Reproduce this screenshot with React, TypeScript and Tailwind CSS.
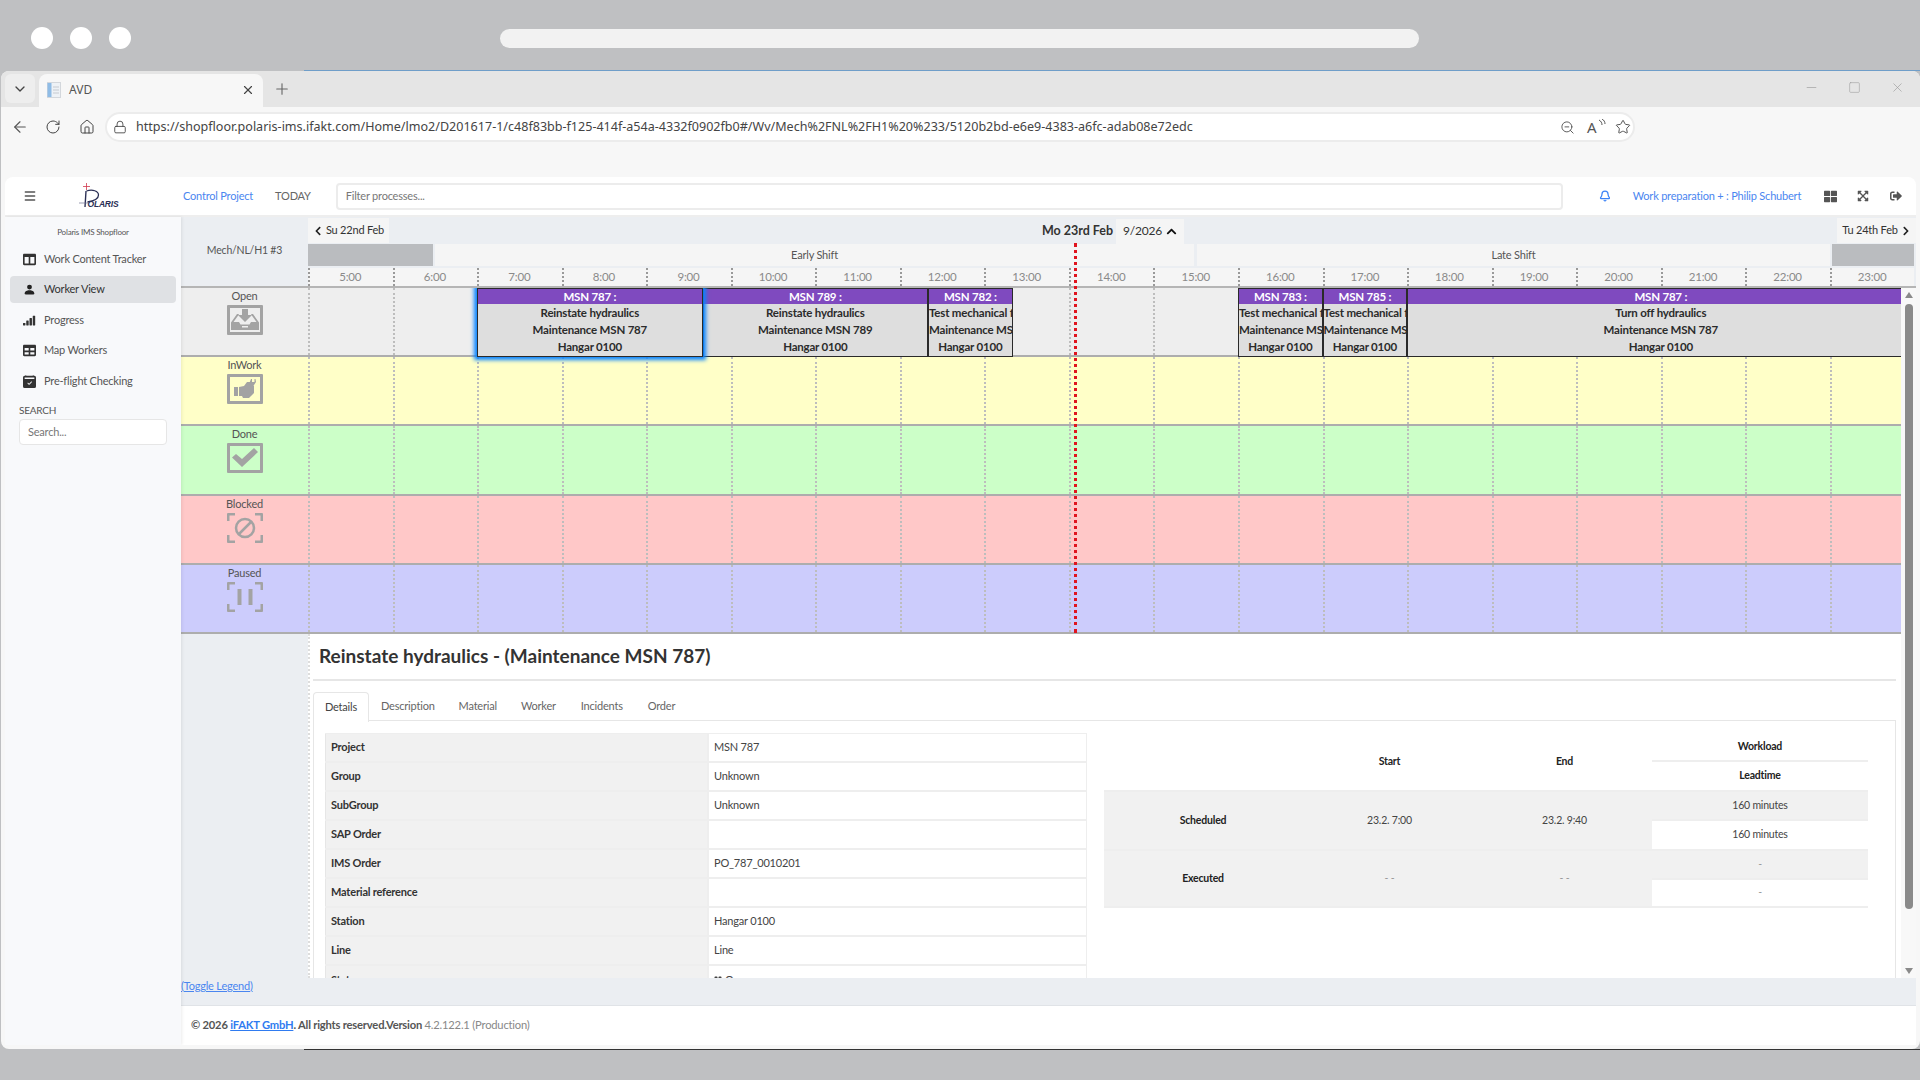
import { ArrowLeft, ChevronDown, Home, Lock, Minus, Plus, RotateCw, Square, Star, X, ZoomOut, Bell, Menu } from "lucide-react";
import { BsCalendar2CheckFill, BsPersonFill, BsReception4 } from "react-icons/bs";
import { FaChevronLeft, FaChevronRight, FaChevronUp, FaColumns, FaExpandArrowsAlt, FaPause, FaSignOutAlt, FaTable, FaThLarge } from "react-icons/fa";

const HOUR = 84.55;
const hours = Array.from({ length: 19 }, (_, i) => `${i + 5}:00`);

const events = [
  { msn: "MSN 787 :", title: "Reinstate hydraulics", order: "Maintenance MSN 787", start: 7, mins: 160, selected: true },
  { msn: "MSN 789 :", title: "Reinstate hydraulics", order: "Maintenance MSN 789", start: 9 + 40 / 60, mins: 160 },
  { msn: "MSN 782 :", title: "Test mechanical functions", order: "Maintenance MSN 782", start: 12 + 20 / 60, mins: 60 },
  { msn: "MSN 783 :", title: "Test mechanical functions", order: "Maintenance MSN 783", start: 16, mins: 60 },
  { msn: "MSN 785 :", title: "Test mechanical functions", order: "Maintenance MSN 785", start: 17, mins: 60 },
  { msn: "MSN 787 :", title: "Turn off hydraulics", order: "Maintenance MSN 787", start: 18, mins: 360 },
];

const nav = [
  { label: "Work Content Tracker", Icon: FaColumns },
  { label: "Worker View", Icon: BsPersonFill, active: true },
  { label: "Progress", Icon: BsReception4 },
  { label: "Map Workers", Icon: FaTable },
  { label: "Pre-flight Checking", Icon: BsCalendar2CheckFill },
];

const details = [
  ["Project", "MSN 787"],
  ["Group", "Unknown"],
  ["SubGroup", "Unknown"],
  ["SAP Order", ""],
  ["IMS Order", "PO_787_0010201"],
  ["Material reference", ""],
  ["Station", "Hangar 0100"],
  ["Line", "Line"],
];

function OpenIcon() {
  return (
    <svg width="36" height="30" viewBox="0 0 36 30" fill="#a3a3a3">
      <path fillRule="evenodd" d="M1 0h34a1 1 0 0 1 1 1v28a1 1 0 0 1-1 1H1a1 1 0 0 1-1-1V1a1 1 0 0 1 1-1zm2 3v24h30V3z" />
      <path d="M15 4h6v6h4l-7 7-7-7h4z" />
      <path d="M10 9h2l-1 2h-.2L6.5 17H12l1.5 2.5h9L24 17h5.500l-4.300-6H25l-1-2h2l6 8.500V25H4v-7.500z" />
      <path d="M15 21h6v1.500h-6z" fill="#eeeeee" />
    </svg>
  );
}

function InWorkIcon() {
  return (
    <svg width="36" height="30" viewBox="0 0 36 30" fill="#a3a3a3">
      <path fillRule="evenodd" d="M1 0h34a1 1 0 0 1 1 1v28a1 1 0 0 1-1 1H1a1 1 0 0 1-1-1V1a1 1 0 0 1 1-1zm2 3v24h30V3z" />
      <path d="M7 13h4v9H7z" />
      <path d="M12 13l5-1 3-4h4l3 4v7l-3 3-2 2h-6l-1-2h-3z" />
      <path d="M22 10l2-5h1v3h2.500V5h1l.5 3-2 3-3 2z" />
    </svg>
  );
}

function DoneIcon() {
  return (
    <svg width="36" height="30" viewBox="0 0 36 30" fill="#a3a3a3">
      <path fillRule="evenodd" d="M1 0h34a1 1 0 0 1 1 1v28a1 1 0 0 1-1 1H1a1 1 0 0 1-1-1V1a1 1 0 0 1 1-1zm2 3v24h30V3z" />
      <path d="M5 14.500l4-3.500 6 5L27 5l4 4-16 15z" />
    </svg>
  );
}

function Brackets() {
  return <path d="M0 8V1a1 1 0 0 1 1-1h7v2.500H2.500V8zM28 0h7a1 1 0 0 1 1 1v7h-2.500V2.500H28zM0 22h2.500v5.500H8V30H1a1 1 0 0 1-1-1zM33.500 22H36v7a1 1 0 0 1-1 1h-7v-2.500h5.500z" />;
}

function BlockedIcon() {
  return (
    <svg width="36" height="30" viewBox="0 0 36 30" fill="#a3a3a3">
      <Brackets />
      <circle cx="18" cy="15" r="9" fill="none" stroke="#a3a3a3" strokeWidth="2.500" />
      <path d="M12 21L24 9" stroke="#a3a3a3" strokeWidth="2.500" />
    </svg>
  );
}

function PausedIcon() {
  return (
    <svg width="36" height="30" viewBox="0 0 36 30" fill="#a3a3a3">
      <Brackets />
      <rect x="10.500" y="7" width="4" height="16" />
      <rect x="21.500" y="7" width="4" height="16" />
    </svg>
  );
}

const rows = [
  { label: "Open", bg: "bg-[#eeeeee]", Icon: OpenIcon },
  { label: "InWork", bg: "bg-[#ffffc8]", Icon: InWorkIcon },
  { label: "Done", bg: "bg-[#ccffc8]", Icon: DoneIcon },
  { label: "Blocked", bg: "bg-[#ffc8c8]", Icon: BlockedIcon },
  { label: "Paused", bg: "bg-[#ccccfc]", Icon: PausedIcon },
];

function Logo() {
  return (
    <svg width="40" height="27" viewBox="0 0 40 27" className="ml-[42px] shrink-0">
      <path d="M7.500 0v7M4 3.500h7" stroke="#d0394e" strokeWidth="0.800" />
      <path d="M7 8L6 24" stroke="#2b2f55" strokeWidth="1.400" />
      <path d="M7.500 8c6-2 12 0 12 4s-5 6-11 7" fill="none" stroke="#2b2f55" strokeWidth="1.300" />
      <path d="M0 20h10" stroke="#6d7090" strokeWidth="0.700" />
      <text x="8.500" y="24" fontSize="8.500" fontWeight="700" fontStyle="italic" fill="#2b2f55" fontFamily="Liberation Sans, sans-serif">OLARIS</text>
    </svg>
  );
}

function ReadAloud() {
  return (
    <div className="relative w-[16px] h-[16px] leading-[16px]">
      <span className="text-[15px] leading-[16px] text-[#555]">A</span>
      <svg width="8" height="9" viewBox="0 0 8 9" className="absolute right-[-3px] top-0" fill="none" stroke="#555" strokeWidth="1">
        <path d="M1 1c2 1 3 3 3 5M4 0c2 1 3 3 3 5" />
      </svg>
    </div>
  );
}

function Event({ e }: { e: (typeof events)[number] }) {
  return (
    <div
      style={{ left: (e.start - 5) * HOUR, width: (e.mins / 60) * HOUR }}
      className={`absolute top-0 h-[69px] border-[1.5px] border-[#2a2a2a] bg-[#dedede] overflow-hidden whitespace-nowrap text-center text-[11.5px] font-bold leading-[17px] text-[#2b2b2b] ${e.selected ? "z-20 shadow-[0_0_4px_3px_#0a84ff]" : "z-10"}`}
    >
      <div className="h-[15px] bg-[#7f4abf] text-white leading-[15px]">{e.msn}</div>
      <div>{e.title}</div>
      <div>{e.order}</div>
      <div>Hangar 0100</div>
    </div>
  );
}

export default function App() {
  return (
    <div className="w-[1920px] h-[1080px] bg-[#bfc0c2] overflow-hidden flex flex-col text-[#444] font-['Lato','Noto_Sans',sans-serif]">
      <div className="h-[70px] shrink-0 flex items-center pt-[6px]">
        <div className="flex gap-[17px] ml-[31px]">
          <span className="w-[22px] h-[22px] rounded-full bg-white" />
          <span className="w-[22px] h-[22px] rounded-full bg-white" />
          <span className="w-[22px] h-[22px] rounded-full bg-white" />
        </div>
        <div className="ml-[369px] w-[919px] h-[19px] rounded-full bg-[#f2f2f2]" />
      </div>

      <div className="h-px ml-[304px] bg-[#6f9ec9] shrink-0" />

      <div className="h-[978px] shrink-0 flex flex-col bg-[#f7f7f7] rounded-t-lg rounded-b-lg ml-px font-['Noto_Sans',sans-serif]">
        <div className="h-[36px] shrink-0 bg-[#e5e5e5] rounded-t-lg flex items-end pl-[4px] relative">
          <div className="w-[30px] h-[29px] mb-[4px] rounded-md bg-[#eeeeee] flex items-center justify-center">
            <ChevronDown className="size-[16px] text-[#444]" />
          </div>
          <div className="ml-[4px] w-[224px] h-[33px] bg-[#f7f7f7] rounded-t-lg flex items-center pl-[8px] pr-[8px] pb-[2px]">
            <svg width="14" height="16" viewBox="0 0 14 16" className="shrink-0">
              <rect x="0.500" y="0.500" width="13" height="15" fill="#eef2f6" stroke="#d3d7dc" />
              <rect x="0.500" y="1" width="4" height="14" fill="#8fbce6" />
              <path d="M6 5h6M6 8h6M6 11h6" stroke="#c6cad0" />
            </svg>
            <span className="ml-[8px] text-[12px] text-[#555]">AVD</span>
            <X className="ml-auto size-[14px] text-[#444]" />
          </div>
          <Plus className="ml-[10px] mb-[9px] size-[18px] text-[#666]" strokeWidth={1.500} />
          <div className="ml-auto flex items-center gap-[29px] pr-[15px] mb-[12px] text-[#999]">
            <Minus className="size-[15px]" strokeWidth={1} />
            <Square className="size-[13px]" strokeWidth={1} />
            <X className="size-[15px]" strokeWidth={1} />
          </div>
        </div>

        <div className="h-[70px] shrink-0 pt-[5px]">
          <div className="flex items-center">
            <ArrowLeft className="ml-[10px] size-[18px] text-[#555]" strokeWidth={1.500} />
            <RotateCw className="ml-[16px] size-[16px] text-[#444]" strokeWidth={1.500} />
            <Home className="ml-[18px] size-[16px] text-[#444]" strokeWidth={1.500} />
            <div className="ml-[10px] w-[1530px] h-[30px] rounded-full bg-white border-2 border-[#ececec] flex items-center pl-[6px] pr-[2px]">
              <Lock className="size-[14px] text-[#444] shrink-0" strokeWidth={1.500} />
              <span className="ml-[9px] text-[12.56px] text-[#444] whitespace-nowrap">
                https://shopfloor.polaris-ims.ifakt.com/Home/lmo2/D201617-1/c48f83bb-f125-414f-a54a-4332f0902fb0#/Wv/Mech%2FNL%2FH1%20%233/5120b2bd-e6e9-4383-a6fc-adab08e72edc
              </span>
              <div className="ml-auto flex items-center gap-[12px]">
                <ZoomOut className="size-[15px] text-[#555]" strokeWidth={1.500} />
                <ReadAloud />
                <Star className="size-[16px] text-[#555]" strokeWidth={1.500} />
              </div>
            </div>
          </div>
        </div>

        <div className="h-[868px] shrink-0 ml-[4px] mr-[4px] rounded-t-lg bg-white flex flex-col overflow-hidden tracking-[-0.2px] font-['Lato','Noto_Sans',sans-serif]">
          <div className="h-[40px] shrink-0 flex items-center border-b-2 border-[#eeeeee]">
            <Menu className="ml-[18px] size-[14px] text-[#555] shrink-0" strokeWidth={2.500} />
            <Logo />
            <a className="ml-[64px] text-[11px] text-[#4a86f0] whitespace-nowrap">Control Project</a>
            <span className="ml-[22px] text-[11px] text-[#666]">TODAY</span>
            <div className="ml-[25px] w-[1227px] shrink-0 h-[27px] rounded border-2 border-[#ececec] flex items-center pl-[8px] text-[11px] text-[#777]">
              Filter processes...
            </div>
            <Bell className="ml-[36px] size-[12px] text-[#3b82f6] shrink-0" strokeWidth={2.500} />
            <span className="ml-[22px] text-[11px] text-[#4a86f0] whitespace-nowrap">Work preparation + : Philip Schubert</span>
            <FaThLarge className="ml-[23px] size-[13px] text-[#555] shrink-0" />
            <FaExpandArrowsAlt className="ml-[20px] size-[12px] text-[#555] shrink-0" />
            <FaSignOutAlt className="ml-[21px] size-[12px] text-[#555] shrink-0" />
          </div>

          <div className="flex-1 flex min-h-0">
            <div className="w-[176px] shrink-0 bg-[#f8f9fb] shadow-[1px_0_3px_rgba(0,0,0,0.08)] z-30 px-[5px]">
              <div className="h-[28.5px] flex items-center justify-center text-[8px] text-[#555] pt-[2px]">Polaris IMS Shopfloor</div>
              <div className="flex flex-col gap-[3.5px]">
                {nav.map(({ label, Icon, active }) => (
                  <div key={label} className={`h-[27px] flex items-center pl-[13px] rounded text-[11px] ${active ? "bg-[#dfe1e4] text-[#333]" : "text-[#555]"}`}>
                    <Icon className={`size-[13px] ${active ? "text-[#222]" : "text-[#333]"}`} />
                    <span className="ml-[8px] whitespace-nowrap">{label}</span>
                  </div>
                ))}
              </div>
              <div className="mt-[8.5px] ml-[9px] text-[10px] text-[#555]">SEARCH</div>
              <div className="mt-[1px] ml-[9px] w-[148px] h-[26px] rounded bg-white border border-[#e6e6e6] flex items-center pl-[8px] text-[11px] text-[#777]">
                Search...
              </div>
            </div>

            <div className="flex-1 min-w-0 bg-[#ebeef2] flex flex-col relative">
              <div className="h-[71px] shrink-0 flex border-b-2 border-[#b5b5b5]">
                <div className="w-[127px] shrink-0 text-center text-[10.5px] text-[#555] pt-[26px]">Mech/NL/H1 #3</div>
                <div className="flex-1 min-w-0 flex flex-col pt-px">
                  <div className="h-[26px] flex">
                    <div className="w-[81px] h-[25px] bg-[#f5f5f5] flex items-center justify-center gap-[3px] text-[11px] text-[#333]">
                      <FaChevronLeft className="size-[10px] text-[#222]" />
                      Su 22nd Feb
                    </div>
                    <div className="flex-1 flex items-center justify-center gap-[3px]">
                      <span className="text-[12.500px] font-bold text-[#333] tracking-normal">Mo 23rd Feb</span>
                      <div className="w-[68px] h-[25px] bg-[#f5f5f5] flex items-center justify-center gap-[4px] text-[12px] text-[#333]">
                        9/2026
                        <FaChevronUp className="size-[11px] text-[#111]" />
                      </div>
                    </div>
                    <div className="w-[79px] h-[25px] bg-[#f5f5f5] flex items-center justify-center gap-[3px] text-[11px] text-[#333]">
                      Tu 24th Feb
                      <FaChevronRight className="size-[10px] text-[#222]" />
                    </div>
                  </div>
                  <div className="h-[22px] flex text-[11px] text-[#555]">
                    <div className="w-[125px] bg-[#babcbf]" />
                    <div className="ml-[2px] w-[759px] bg-[#f5f5f5] flex items-center justify-center">Early Shift</div>
                    <div className="ml-[3px] w-[633px] bg-[#f5f5f5] flex items-center justify-center">Late Shift</div>
                    <div className="ml-[2px] w-[82px] bg-[#babcbf]" />
                  </div>
                  <div className="h-[18px] mt-[2px] flex">
                    {hours.map((h) => (
                      <div key={h} className="w-[84.55px] shrink-0 bg-[#f5f5f5] border-l-2 border-dotted border-[#999] flex items-center justify-center pr-[2px] text-[11.5px] text-[#8a8a8a]">
                        {h}
                      </div>
                    ))}
                  </div>
                </div>
              </div>

              <div className="h-[690px] shrink-0 flex">
                <div className="w-[1720px] shrink-0 overflow-hidden">
                  <div className="flex flex-col">
                    {rows.map(({ label, bg, Icon }) => (
                      <div key={label} className={`h-[69.2px] shrink-0 flex border-b-2 border-[#adadad] ${bg}`}>
                        <div className="w-[127px] shrink-0 flex flex-col items-center text-[11px] leading-[16px] text-[#555]">
                          {label}
                          <div className="mt-[1px]">
                            <Icon />
                          </div>
                        </div>
                        <div className="relative flex-1 min-w-0">
                          <div className="flex h-full overflow-hidden">
                            {hours.map((h) => (
                              <div key={h} className="w-[84.55px] shrink-0 border-l-2 border-dotted border-[#bdbdbd]" />
                            ))}
                          </div>
                          {label === "Open" && events.map((e) => <Event key={e.order + e.start} e={e} />)}
                        </div>
                      </div>
                    ))}
                  </div>

                  <div className="flex h-[344px] overflow-hidden">
                    <div className="w-[127px] shrink-0" />
                    <div className="flex-1 min-w-0 bg-white border-l-2 border-dotted border-[#dddddd] pl-[3px] pr-[5px]">
                      <div className="h-[47px] flex items-center border-b-2 border-[#e6e6e6]">
                        <h1 className="pl-[6px] text-[19px] font-bold text-[#333] whitespace-nowrap tracking-normal">Reinstate hydraulics - (Maintenance MSN 787)</h1>
                      </div>
                      <div className="mt-[11px] h-[29px] flex items-stretch text-[11px] text-[#666]">
                        <div className="w-[56px] rounded-t border border-b-0 border-[#e6e6e6] bg-white flex items-center justify-center text-[#444] relative z-10 -mb-px">Details</div>
                        <div className="flex-1 flex items-center border-b border-[#e6e6e6]">
                          <span className="ml-[12px]">Description</span>
                          <span className="ml-[24px]">Material</span>
                          <span className="ml-[24px]">Worker</span>
                          <span className="ml-[25px]">Incidents</span>
                          <span className="ml-[25px]">Order</span>
                        </div>
                      </div>
                      <div className="h-[300px] border-l border-r border-[#e6e6e6] pl-[11px] pt-[12px] flex gap-[17px] items-start">
                        <div className="w-[762px] shrink-0 border-t border-r border-[#eeeeee] text-[11px]">
                          {details.map(([k, v]) => (
                            <div key={k} className="h-[29px] flex border-b-2 border-[#eeeeee]">
                              <div className="w-[382px] shrink-0 bg-[#f1f1f1] border-l border-[#e6e6e6] flex items-center pl-[5px] font-bold text-[#333]">{k}</div>
                              <div className="flex-1 flex items-center pl-[5px] text-[#444] border-l-2 border-[#eeeeee]">{v}</div>
                            </div>
                          ))}
                          <div className="h-[29px] flex">
                            <div className="w-[382px] shrink-0 bg-[#f1f1f1] border-l border-[#e6e6e6] flex items-center pl-[5px] font-bold text-[#333]">State</div>
                            <div className="flex-1 flex items-center pl-[5px] gap-[3px] text-[#444] border-l-2 border-[#eeeeee]">
                              <FaPause className="size-[8px]" />
                              Open
                            </div>
                          </div>
                        </div>
                        <div className="w-[764px] shrink-0 text-[10.5px] text-[#444] text-center">
                          <div className="h-[57px] grid grid-cols-[198px_175px_175px_216px] font-bold text-[#222]">
                            <div />
                            <div className="flex items-center justify-center">Start</div>
                            <div className="flex items-center justify-center">End</div>
                            <div className="flex flex-col">
                              <div className="h-[29px] flex items-center justify-center border-b-2 border-[#eeeeee]">Workload</div>
                              <div className="flex-1 flex items-center justify-center">Leadtime</div>
                            </div>
                          </div>
                          <div className="h-[59px] grid grid-cols-[198px_175px_175px_216px] border-t-2 border-[#eeeeee]">
                            <div className="bg-[#f1f1f1] flex items-center justify-center font-bold text-[#222]">Scheduled</div>
                            <div className="bg-[#f1f1f1] flex items-center justify-center">23.2. 7:00</div>
                            <div className="bg-[#f1f1f1] flex items-center justify-center">23.2. 9:40</div>
                            <div className="flex flex-col">
                              <div className="h-[29px] bg-[#f1f1f1] flex items-center justify-center border-b-2 border-[#eeeeee]">160 minutes</div>
                              <div className="flex-1 flex items-center justify-center">160 minutes</div>
                            </div>
                          </div>
                          <div className="h-[59px] grid grid-cols-[198px_175px_175px_216px] border-t-2 border-b-2 border-[#eeeeee]">
                            <div className="bg-[#f1f1f1] flex items-center justify-center font-bold text-[#222]">Executed</div>
                            <div className="bg-[#f1f1f1] flex items-center justify-center text-[#999]">- -</div>
                            <div className="bg-[#f1f1f1] flex items-center justify-center text-[#999]">- -</div>
                            <div className="flex flex-col text-[#999]">
                              <div className="h-[29px] bg-[#f1f1f1] flex items-center justify-center border-b-2 border-[#eeeeee]">-</div>
                              <div className="flex-1 flex items-center justify-center">-</div>
                            </div>
                          </div>
                        </div>
                      </div>
                    </div>
                  </div>
                </div>

                <div className="flex-1 min-w-0 bg-[#f8f8f8] flex flex-col items-center">
                  <div className="mt-[4px] w-0 h-0 border-x-[4px] border-x-transparent border-b-[6px] border-b-[#8a8a8a]" />
                  <div className="mt-[6px] w-[8px] h-[605px] rounded-full bg-[#8a8a8a]" />
                  <div className="mt-auto mb-[4px] w-0 h-0 border-x-[4px] border-x-transparent border-t-[6px] border-t-[#8a8a8a]" />
                </div>
              </div>

              <div className="h-[28px] shrink-0 border-b border-[#e0e3e7] flex items-start text-[11px] leading-[16px]">
                <a className="text-[#4a86f0] underline">(Toggle Legend)</a>
              </div>
              <div className="flex-1 bg-white flex items-center pl-[10px] text-[11.2px] font-bold text-[#555] whitespace-nowrap">
                © 2026&nbsp;<a className="text-[#2f7bf0] underline">iFAKT GmbH</a>. All rights reserved.Version&nbsp;<span className="font-normal text-[#888]">4.2.122.1 (Production)</span>
              </div>

              <div className="absolute left-[893px] top-[26px] h-[390px] border-l-[3px] border-dotted border-[#e0141e] z-20" />
            </div>
          </div>
        </div>
      </div>

      <div className="h-px ml-[304px] bg-[#333] shrink-0" />
    </div>
  );
}
